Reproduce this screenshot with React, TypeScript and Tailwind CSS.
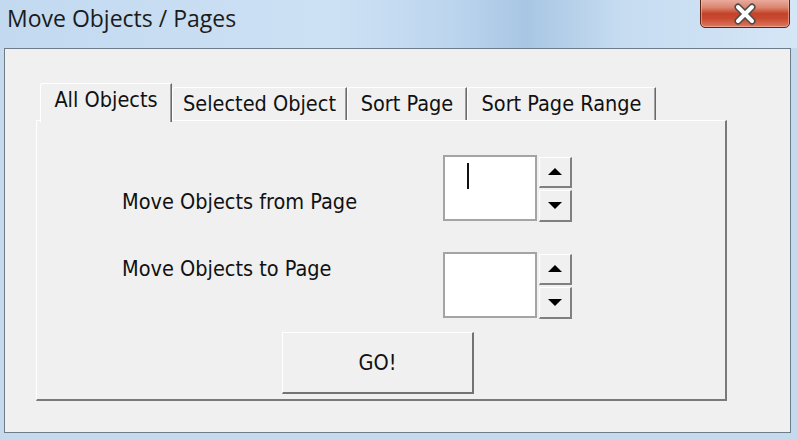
import React from "react";

const UI: React.CSSProperties = {
  fontFamily: '"DejaVu Sans Condensed", "DejaVu Sans", sans-serif',
};

function Tab({ label, active, width }: { label: string; active?: boolean; width: number }) {
  if (active) {
    return (
      <div
        className="relative z-10 -mb-[2px] h-[39px] shrink-0 rounded-tl-[3px] border-l border-t border-r border-l-white border-t-white border-r-[#696969] bg-[#f0f0f0] pt-[3px] text-center text-[21.5px] leading-[26px] text-[#111] shadow-[inset_-1px_0_0_#a0a0a0]"
        style={{ ...UI, width }}
      >
        {label}
      </div>
    );
  }
  return (
    <div
      className="h-[33px] shrink-0 rounded-tl-[3px] border-l border-t border-r border-l-white border-t-white border-r-[#696969] bg-[#f0f0f0] pt-[3px] text-center text-[21.5px] leading-[26px] text-[#111] shadow-[inset_-1px_0_0_#a0a0a0]"
      style={{ ...UI, width }}
    >
      {label}
    </div>
  );
}

function Arrow({ up }: { up?: boolean }) {
  return (
    <svg width="14" height="8" viewBox="0 0 14 8">
      {up ? <polygon points="7,0 14,7 0,7" fill="#000" /> : <polygon points="0,0 14,0 7,7" fill="#000" />}
    </svg>
  );
}

function Spinner({ caret }: { caret?: boolean }) {
  return (
    <div className="flex h-[67px] shrink-0">
      <div className="relative h-[66px] w-[94px] border-2 border-[#a4a4a4] bg-white">
        {caret && <div className="absolute left-[22px] top-[6px] h-[26px] w-[2px] bg-[#111]" />}
      </div>
      <div className="ml-[2px] flex w-[33px] flex-col gap-[2px] pt-[2px]">
        <div className="flex h-[31px] items-center justify-center border-l border-t border-r-2 border-b-2 border-l-white border-t-white border-r-[#808080] border-b-[#808080] bg-[#f0f0f0]">
          <Arrow up />
        </div>
        <div className="flex h-[32px] items-center justify-center border-l border-t border-r-2 border-b-2 border-l-white border-t-white border-r-[#808080] border-b-[#808080] bg-[#f0f0f0]">
          <Arrow />
        </div>
      </div>
    </div>
  );
}

export default function App() {
  return (
    <div className="flex h-[440px] w-[797px] flex-col overflow-hidden bg-[#c6daee]">
      {/* Title bar */}
      <div className="relative h-[48px] shrink-0 bg-[linear-gradient(90deg,#c2d9f0_0%,#cde1f4_42%,#bcd5ee_57%,#a8c6e3_66%,#c6dcf1_78%,#d5e6f6_100%)]">
        <div
          className="pl-[7px] pt-[3px] text-[23px] leading-[31px] text-[#1b1b1b]"
          style={{ fontFamily: '"Open Sans", "Noto Sans", sans-serif' }}
        >
          Move Objects / Pages
        </div>
        <div className="absolute left-[700px] top-[-2px] flex h-[30px] w-[90px] items-center justify-center rounded-b-[5px] border border-[#5a2618] bg-[linear-gradient(180deg,#eab0a2_0%,#dc8670_30%,#c4432a_52%,#c84a30_70%,#de7a5e_100%)] shadow-[inset_0_0_0_1px_rgba(255,200,190,0.5)]">
          <svg width="26" height="22" viewBox="0 0 26 22" className="mt-[2px]">
            <path d="M6 4 L20 18 M20 4 L6 18" stroke="#4a4a4a" strokeWidth="7" strokeLinecap="round" />
            <path d="M6 4 L20 18 M20 4 L6 18" stroke="#ffffff" strokeWidth="4" strokeLinecap="round" />
          </svg>
        </div>
      </div>

      {/* Client area */}
      <div className="ml-[4px] h-[385px] w-[787px] shrink-0 border border-[#6e7c8a] bg-[#f0f0f0] pl-[31px] pt-[34px]">
        {/* Tab strip */}
        <div className="flex h-[37px] items-end pl-[4px]">
          <Tab label="All Objects" active width={132} />
          <Tab label="Selected Object" width={175} />
          <Tab label="Sort Page" width={120} />
          <Tab label="Sort Page Range" width={189} />
        </div>
        {/* Panel */}
        <div className="h-[281px] w-[691px] border-l border-t border-r-2 border-b-2 border-l-white border-t-white border-r-[#7a7a7a] border-b-[#7a7a7a] bg-[#f0f0f0] pl-[85px] pt-[34px]">
          <div className="flex">
            <div className="mt-[34px] w-[321px] text-[21.5px] leading-[26px] text-[#111]" style={UI}>
              Move Objects from Page
            </div>
            <Spinner caret />
          </div>
          <div className="mt-[30px] flex">
            <div className="mt-[4px] w-[321px] text-[21.5px] leading-[26px] text-[#111]" style={UI}>
              Move Objects to Page
            </div>
            <Spinner />
          </div>
          <div className="ml-[160px] mt-[13px] flex h-[62px] w-[192px] items-center justify-center border-l border-t border-r-2 border-b-2 border-l-white border-t-white border-r-[#737373] border-b-[#737373] bg-[#f0f0f0] text-[21.5px] leading-[26px] text-[#111]" style={UI}>
            GO!
          </div>
        </div>
      </div>
    </div>
  );
}
